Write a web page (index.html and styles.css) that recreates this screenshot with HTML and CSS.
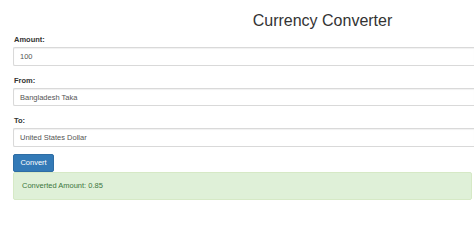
FILE: index.html
```html
<!DOCTYPE html>
<html lang="en">
<head>
<meta charset="utf-8">
<title>Currency Converter</title>
<link rel="stylesheet" href="styles.css">
</head>
<body>
<div class="page">
  <h1 class="title">Currency Converter</h1>
  <form class="form">
    <div class="group">
      <label class="label" for="amount">Amount:</label>
      <input class="control" id="amount" type="text" value="100">
    </div>
    <div class="group">
      <label class="label" for="from">From:</label>
      <div class="control">Bangladesh Taka</div>
    </div>
    <div class="group last">
      <label class="label" for="to">To:</label>
      <div class="control">United States Dollar</div>
    </div>
    <button class="btn" type="button">Convert</button>
  </form>
  <div class="alert">Converted Amount: 0.85</div>
</div>
</body>
</html>
```
FILE: styles.css
```css
html, body {
  margin: 0;
  padding: 0;
  background: #fff;
  overflow: hidden;
}
body {
  font-family: "Liberation Sans", Arial, sans-serif;
  color: #333;
}
.page {
  box-sizing: border-box;
  width: 474px;
  padding-left: 13px;
}
.title {
  margin: 12px 0 4.9px;
  padding-left: 158px;
  font-size: 16px;
  line-height: 17.6px;
  font-weight: normal;
  text-align: center;
  color: #333;
}
.form {
  margin: 0;
}
.group {
  margin-bottom: 9px;
}
.group.last {
  margin-bottom: 7px;
}
.label {
  display: block;
  font-size: 7.5px;
  line-height: 11px;
  font-weight: bold;
  margin-bottom: 2px;
  padding-left: 1px;
}
.control {
  display: flex;
  align-items: center;
  box-sizing: border-box;
  width: 100%;
  height: 18.5px;
  margin: 0;
  padding: 0 6px;
  border: 1px solid #d9d9d9;
  border-right: none;
  border-radius: 2px 0 0 2px;
  box-shadow: inset 0 1px 1px rgba(0,0,0,.06);
  font-family: "Liberation Sans", Arial, sans-serif;
  font-size: 7.5px;
  color: #555;
  background: #fff;
  outline: none;
}
.btn {
  display: block;
  height: 18px;
  margin: 0;
  padding: 0 6.4px;
  border: 1px solid #2e6da4;
  border-radius: 2px;
  background: #337ab7;
  color: #fff;
  font-family: "Liberation Sans", Arial, sans-serif;
  font-size: 7.5px;
  line-height: 16px;
}
.alert {
  box-sizing: border-box;
  width: 459px;
  height: 28px;
  padding: 0 8px;
  display: flex;
  align-items: center;
  background: #dff0d8;
  border: 1px solid #d6e9c6;
  border-radius: 2px;
  color: #3c763d;
  font-size: 7.5px;
}
```
